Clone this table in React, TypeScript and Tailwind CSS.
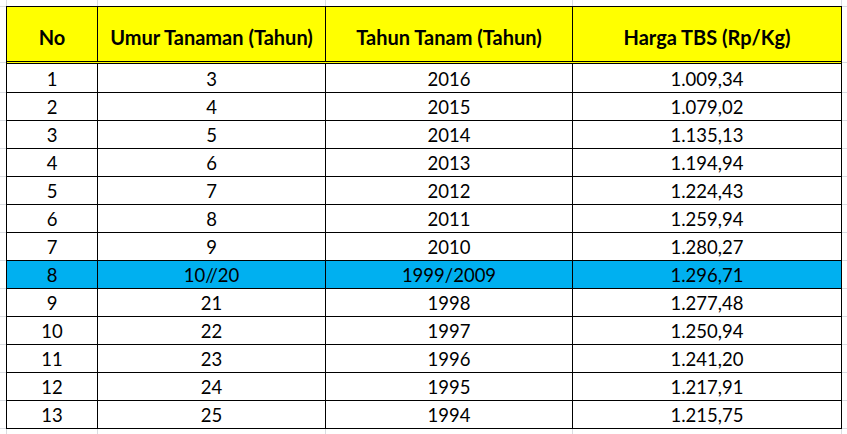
import React from "react";

const rows: [string, string, string, string][] = [
  ["1", "3", "2016", "1.009,34"],
  ["2", "4", "2015", "1.079,02"],
  ["3", "5", "2014", "1.135,13"],
  ["4", "6", "2013", "1.194,94"],
  ["5", "7", "2012", "1.224,43"],
  ["6", "8", "2011", "1.259,94"],
  ["7", "9", "2010", "1.280,27"],
  ["8", "10//20", "1999/2009", "1.296,71"],
  ["9", "21", "1998", "1.277,48"],
  ["10", "22", "1997", "1.250,94"],
  ["11", "23", "1996", "1.241,20"],
  ["12", "24", "1995", "1.217,91"],
  ["13", "25", "1994", "1.215,75"],
];

function Strip({ grow }: { grow?: boolean }) {
  return (
    <div className={grow ? "flex flex-1" : "flex h-[6px]"}>
      <div className="w-[6px]" />
      <div className="w-[91px] border-l border-[#d9dce1]" />
      <div className="w-[228px] border-l border-[#d9dce1]" />
      <div className="w-[247px] border-l border-[#d9dce1]" />
      <div className="w-[269px] border-l border-[#d9dce1]" />
      <div className="flex-1 border-l border-[#d9dce1]" />
    </div>
  );
}

function Margin({ grow }: { grow?: boolean }) {
  return (
    <div className={grow ? "flex flex-1 flex-col" : "flex w-[6px] flex-col"}>
      <div className="h-[56px] border-t border-[#d9dce1]" />
      <div className="h-[30px] border-t border-[#d9dce1]" />
      {Array.from({ length: 12 }).map((_, i) => (
        <div key={i} className="h-[28px] border-t border-[#d9dce1]" />
      ))}
      <div className="flex-1 border-t border-[#d9dce1]" />
    </div>
  );
}

export default function App() {
  return (
    <div className="flex h-[434px] w-[847px] flex-col overflow-hidden bg-white font-['Lato',sans-serif] text-black">
      <Strip />
      <div className="flex">
        <Margin />
        <div className="flex w-[836px] flex-col border border-black">
          <div className="flex h-[57px] border-b-[3px] border-double border-black bg-[#ffff00] text-[20px] font-bold">
            <div className="flex w-[91px] items-center justify-center border-r border-black pt-[5px]">No</div>
            <div className="flex w-[228px] items-center justify-center border-r border-black pt-[5px]">Umur Tanaman (Tahun)</div>
            <div className="flex w-[247px] items-center justify-center border-r border-black pt-[5px]">Tahun Tanam (Tahun)</div>
            <div className="flex flex-1 items-center justify-center pt-[5px]">Harga TBS (Rp/Kg)</div>
          </div>
          {rows.map((r, i) => {
            const h = i === 0 ? "h-[29px] border-b" : i === rows.length - 1 ? "h-[27px]" : "h-[28px] border-b";
            const bg = i === 7 ? "bg-[#00b0f0]" : "";
            return (
              <div key={i} className={`flex ${h} border-black text-[18.5px] ${bg}`}>
                <div className="flex w-[91px] items-center justify-center border-r border-black pt-[3px]">{r[0]}</div>
                <div className="flex w-[228px] items-center justify-center border-r border-black pt-[3px]">{r[1]}</div>
                <div className="flex w-[247px] items-center justify-center border-r border-black pt-[3px]">{r[2]}</div>
                <div className="flex flex-1 items-center justify-center pt-[3px]">{r[3]}</div>
              </div>
            );
          })}
        </div>
        <Margin grow />
      </div>
      <Strip grow />
    </div>
  );
}
